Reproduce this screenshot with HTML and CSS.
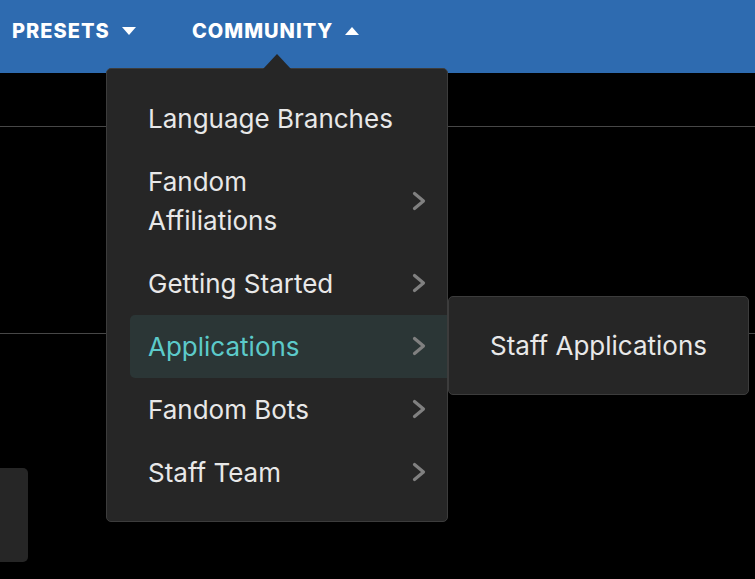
FILE: index.html
```html
<!DOCTYPE html>
<html lang="en">
<head>
  <meta charset="UTF-8">
  <title>Community Menu</title>
  <meta name="viewport" content="width=device-width, initial-scale=1">
  <link rel="stylesheet" href="styles.css">
</head>
<body>

<header class="topbar">
  <a class="nav-item presets">Presets <span class="caret down"></span></a>
  <a class="nav-item">Community <span class="caret up"></span></a>
</header>

<main class="page">
  <div class="band first"></div>
  <div class="band second"></div>
  <div class="side-card"></div>
</main>

<!-- open dropdown under COMMUNITY -->
<div class="dropdown">
  <ul class="menu">
    <li class="menu-item"><span class="label">Language Branches</span></li>
    <li class="menu-item">
      <span class="label">Fandom<br>Affiliations</span>
      <svg class="chev" viewBox="0 0 14 20"><polyline points="2.5,2.5 11.5,10 2.5,17.5"/></svg>
    </li>
    <li class="menu-item">
      <span class="label">Getting Started</span>
      <svg class="chev" viewBox="0 0 14 20"><polyline points="2.5,2.5 11.5,10 2.5,17.5"/></svg>
    </li>
    <li class="menu-item active">
      <span class="label">Applications</span>
      <svg class="chev" viewBox="0 0 14 20"><polyline points="2.5,2.5 11.5,10 2.5,17.5"/></svg>
      <ul class="menu submenu">
        <li class="menu-item"><span class="label">Staff Applications</span></li>
      </ul>
    </li>
    <li class="menu-item">
      <span class="label">Fandom Bots</span>
      <svg class="chev" viewBox="0 0 14 20"><polyline points="2.5,2.5 11.5,10 2.5,17.5"/></svg>
    </li>
    <li class="menu-item">
      <span class="label">Staff Team</span>
      <svg class="chev" viewBox="0 0 14 20"><polyline points="2.5,2.5 11.5,10 2.5,17.5"/></svg>
    </li>
  </ul>
</div>

</body>
</html>
```

FILE: styles.css
```css
body { margin: 0; background: #000; font-family: "Inter", "Noto Sans", sans-serif; width: 755px; height: 579px; overflow: hidden; position: relative; }

.topbar { height: 73px; background: #2e6bb0; display: flex; align-items: center; gap: 0; padding: 0 0 12px 12px; box-sizing: border-box; }
.nav-item { color: #fff; font-weight: 800; font-size: 20px; letter-spacing: 1px; text-transform: uppercase; display: flex; align-items: center; gap: 12px; }
.nav-item.presets { width: 180px; }
.caret { width: 0; height: 0; border-left: 7.5px solid transparent; border-right: 7.5px solid transparent; }
.caret.down { border-top: 8px solid #fff; }
.caret.up { border-bottom: 8px solid #fff; }

.band { border-bottom: 1px solid #474747; }
.band.first { height: 53px; }
.band.second { height: 206px; }
.side-card { width: 28px; height: 94px; margin-top: 134px; background: #262626; border-radius: 0 5px 5px 0; }

.dropdown { position: absolute; left: 106px; top: 68px; width: 340px; background: #262626; border: 1px solid #3c3c3c; border-radius: 5px; }
.dropdown::before { content: ""; position: absolute; left: 156px; top: -15px; border-left: 14px solid transparent; border-right: 14px solid transparent; border-bottom: 15px solid #262626; }

.menu { list-style: none; margin: 0; padding: 17.5px 0 17px 23px; }
.menu-item { position: relative; display: flex; align-items: center; justify-content: space-between; padding: 12px 21px 12px 18px; color: #e8e8e8; font-size: 26px; line-height: 39px; border-radius: 5px 0 0 5px; }
.menu-item.active { background: #2b3636; color: #5ccaca; }

.chev { width: 14px; height: 20px; overflow: visible; fill: none; stroke: #808080; stroke-width: 3.2; stroke-linecap: round; stroke-linejoin: round; }

.submenu { position: absolute; left: 318px; top: -19px; width: 276px; background: #262626; border: 1px solid #3c3c3c; border-radius: 5px; }
.submenu .menu-item { padding-right: 18px; }
```
